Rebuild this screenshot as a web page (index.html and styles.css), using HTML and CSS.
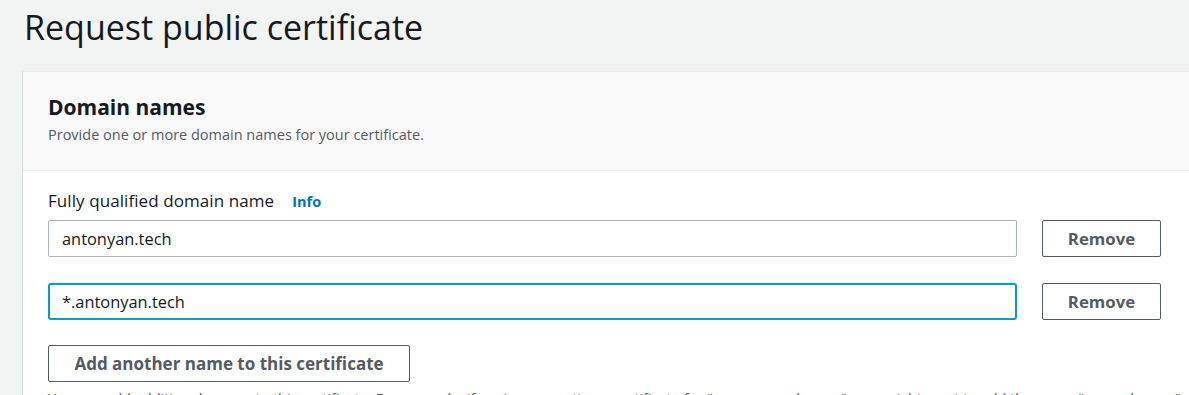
FILE: index.html
```html
<!DOCTYPE html>
<html>
<head>
<meta charset="utf-8">
<link rel="stylesheet" href="styles.css">
</head>
<body>
<div class="page">
  <h1 class="title">Request public certificate</h1>
  <section class="container">
    <div class="header">
      <h2 class="header-title">Domain names</h2>
      <p class="header-desc">Provide one or more domain names for your certificate.</p>
    </div>
    <div class="body">
      <div class="label-row">
        <span class="label">Fully qualified domain name</span>
        <a class="info">Info</a>
      </div>
      <div class="row">
        <div class="input">antonyan.tech</div>
        <button class="btn">Remove</button>
      </div>
      <div class="row">
        <div class="input focused">*.antonyan.tech</div>
        <button class="btn">Remove</button>
      </div>
      <button class="btn add">Add another name to this certificate</button>
      <p class="hint">You can add additional names to this certificate. For example, if you're requesting a certificate for "www.example.com", you might want to add the name "example.com" so that customers can reach your site by either name.</p>
    </div>
  </section>
</div>
</body>
</html>
```
FILE: styles.css
```css
* { box-sizing: border-box; }
html, body { margin: 0; padding: 0; }
body {
  background: #f2f3f3;
  font-family: "Open Sans", "Noto Sans", sans-serif;
  color: #16191f;
  overflow: hidden;
  width: 1189px;
  height: 395px;
}
.page {
  padding: 0 0 0 22px;
}
.title {
  margin: 0;
  padding: 5px 0 0 2px;
  height: 71px;
  font-size: 34px;
  font-weight: 400;
  line-height: 44px;
  color: #16191f;
}
.container {
  background: #fff;
  border-left: 1px solid #d5dbdb;
  border-top: 1px solid #eaeded;
  width: 1200px;
}
.header {
  background: #fafafa;
  border-bottom: 1px solid #eaeded;
  padding: 21px 25px 24px 25px;
  height: 99px;
}
.header-title {
  margin: 0;
  font-size: 21px;
  font-weight: 700;
  line-height: 28px;
}
.header-desc {
  margin: 4px 0 0 0;
  font-size: 14.5px;
  line-height: 20px;
  color: #545b64;
}
.body {
  padding: 15px 25px 0 25px;
}
.label-row {
  display: flex;
  align-items: center;
  gap: 18px;
  height: 29px;
}
.label {
  font-size: 17px;
  line-height: 22px;
  letter-spacing: 0.08px;
}
.info {
  font-size: 14.5px;
  font-weight: 700;
  color: #0073bb;
  padding-top: 2px;
}
.row {
  display: flex;
  gap: 25px;
  margin-top: 5px;
  margin-bottom: 26px;
}
.input {
  width: 969px;
  height: 37px;
  border: 1px solid #aab7b8;
  border-radius: 2px;
  padding: 0 13px;
  font-size: 16.4px;
  line-height: 35px;
  color: #16191f;
  background: #fff;
}
.input.focused {
  border: 2px solid #00a1c9;
  padding: 0 12px;
  line-height: 33px;
  border-radius: 3px;
}
.btn {
  height: 37px;
  width: 119px;
  border: 1px solid #545b64;
  border-radius: 2px;
  background: #fff;
  font-family: inherit;
  font-size: 16.8px;
  font-weight: 700;
  color: #545b64;
  padding: 0;
}
.btn.add {
  display: block;
  width: 362px;
  margin-top: -1px;
  font-size: 17px;
}
.hint {
  margin: 6px 0 0 0;
  font-size: 14.5px;
  line-height: 22px;
  color: #545b64;
  white-space: nowrap;
}
```
